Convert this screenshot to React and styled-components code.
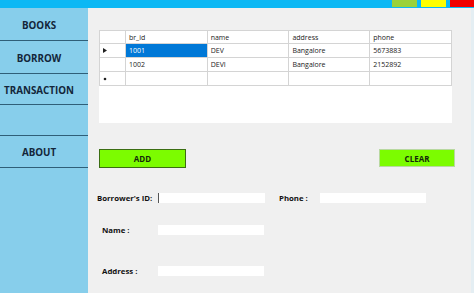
import React from 'react';
import styled, { createGlobalStyle } from 'styled-components';

const GlobalStyle = createGlobalStyle`
  html, body {
    margin: 0;
    padding: 0;
    background: #f0f0f0;
  }
  body {
    font-family: "Open Sans", "Noto Sans", sans-serif;
  }
`;

const Window = styled.div`
  width: 474px;
  height: 293px;
  display: flex;
  flex-direction: column;
  overflow: hidden;
`;

const TopBar = styled.div`
  height: 8px;
  flex: 0 0 8px;
  background: #0cb8f4;
  display: flex;
  justify-content: flex-end;
  gap: 4px;
`;

const WinButton = styled.div`
  width: ${p => p.w}px;
  height: 7px;
  background: ${p => p.color};
`;

const Body = styled.div`
  flex: 1;
  display: flex;
  min-height: 0;
`;

const Sidebar = styled.nav`
  width: 88px;
  flex: 0 0 88px;
  background: #87ceeb;
  display: flex;
  flex-direction: column;
`;

const NavButton = styled.div`
  height: ${p => p.h}px;
  flex-shrink: 0;
  box-sizing: border-box;
  border-bottom: 1px solid #2f5f78;
  display: flex;
  align-items: center;
  justify-content: center;
  padding: 2px 10px 0 0;
  font-weight: 700;
  font-size: 9.8px;
  color: #13263a;
`;

const Main = styled.main`
  flex: 1;
  padding: 22px 16px 0 11px;
  border-right: 3px solid #e4eef3;
  display: flex;
  flex-direction: column;
  overflow: hidden;
  & > * { flex-shrink: 0; }
`;

const GridArea = styled.div`
  width: 353px;
  height: 93px;
  background: #ffffff;
`;

const Table = styled.table`
  border-collapse: collapse;
  table-layout: fixed;
  font-size: 7px;
  color: #222;
  td, th {
    border: 1px solid #d4d4d4;
    padding: 0 0 0 3px;
    text-align: left;
    font-weight: 400;
    white-space: nowrap;
    overflow: hidden;
  }
  th { height: 12px; }
  td { height: 13px; }
`;

const RowHead = styled.td`
  && { padding: 0 0 0 3px; }
`;

const Cell = styled.td`
  background: ${p => (p.selected ? '#0078d7' : 'transparent')};
  color: ${p => (p.selected ? '#ffffff' : 'inherit')};
`;

const ButtonRow = styled.div`
  display: flex;
  justify-content: space-between;
  margin-top: 26px;
`;

const GreenButton = styled.div`
  width: ${p => p.w}px;
  height: ${p => p.h}px;
  box-sizing: border-box;
  background: #7cfc00;
  border: 1px solid ${p => p.edge};
  display: flex;
  align-items: center;
  justify-content: center;
  font-weight: 700;
  font-size: 8px;
  color: #14280a;
`;

const Form = styled.div`
  display: grid;
  grid-template-columns: 61px 121px 41px 107px;
  grid-template-rows: 32px 32px 50px;
  align-items: center;
  margin-top: 14px;
  margin-left: -2px;
`;

const Label = styled.span`
  font-weight: 700;
  font-size: 7.8px;
  color: #111;
  padding-left: ${p => p.indent || 0}px;
`;

const Field = styled.div`
  width: 106px;
  height: 10px;
  background: #ffffff;
  border-left: ${p => (p.focused ? '1px solid #555' : 'none')};
`;

const Spacer = styled.span``;

function RowArrow() {
  return (
    <svg width="4" height="5" viewBox="0 0 4 5">
      <path d="M0 0 L4 2.5 L0 5 Z" fill="#222" />
    </svg>
  );
}

function NewRowMark() {
  return (
    <svg width="4" height="4" viewBox="0 0 4 4">
      <circle cx="2" cy="2" r="1.3" fill="#222" />
    </svg>
  );
}

const rows = [
  { id: '1001', name: 'DEV', address: 'Bangalore', phone: '5673883' },
  { id: '1002', name: 'DEVI', address: 'Bangalore', phone: '2152892' },
];

export default function App() {
  return (
    <Window>
      <GlobalStyle />
      <TopBar>
        <WinButton w={25} color="#9ad23a" />
        <WinButton w={25} color="#ffff00" />
        <WinButton w={24} color="#f00000" />
      </TopBar>
      <Body>
        <Sidebar>
          <NavButton h={33}>BOOKS</NavButton>
          <NavButton h={33}>BORROW</NavButton>
          <NavButton h={31}>TRANSACTION</NavButton>
          <NavButton h={31}></NavButton>
          <NavButton h={32}>ABOUT</NavButton>
        </Sidebar>
        <Main>
          <GridArea>
            <Table>
              <colgroup>
                <col style={{ width: 26 }} />
                <col style={{ width: 82 }} />
                <col style={{ width: 82 }} />
                <col style={{ width: 81 }} />
                <col style={{ width: 82 }} />
              </colgroup>
              <thead>
                <tr>
                  <th></th>
                  <th>br_id</th>
                  <th>name</th>
                  <th>address</th>
                  <th>phone</th>
                </tr>
              </thead>
              <tbody>
                {rows.map((r, i) => (
                  <tr key={r.id}>
                    <RowHead>{i === 0 && <RowArrow />}</RowHead>
                    <Cell selected={i === 0}>{r.id}</Cell>
                    <Cell>{r.name}</Cell>
                    <Cell>{r.address}</Cell>
                    <Cell>{r.phone}</Cell>
                  </tr>
                ))}
                <tr>
                  <RowHead><NewRowMark /></RowHead>
                  <Cell></Cell>
                  <Cell></Cell>
                  <Cell></Cell>
                  <Cell></Cell>
                </tr>
              </tbody>
            </Table>
          </GridArea>
          <ButtonRow>
            <GreenButton w={87} h={19} edge="#3b6d12">ADD</GreenButton>
            <GreenButton w={76} h={18} edge="#b8d8a0">CLEAR</GreenButton>
          </ButtonRow>
          <Form>
            <Label>Borrower's ID:</Label>
            <Field focused />
            <Label>Phone :</Label>
            <Field />
            <Label indent={5}>Name :</Label>
            <Field />
            <Spacer />
            <Spacer />
            <Label indent={5}>Address :</Label>
            <Field />
            <Spacer />
            <Spacer />
          </Form>
        </Main>
      </Body>
    </Window>
  );
}
